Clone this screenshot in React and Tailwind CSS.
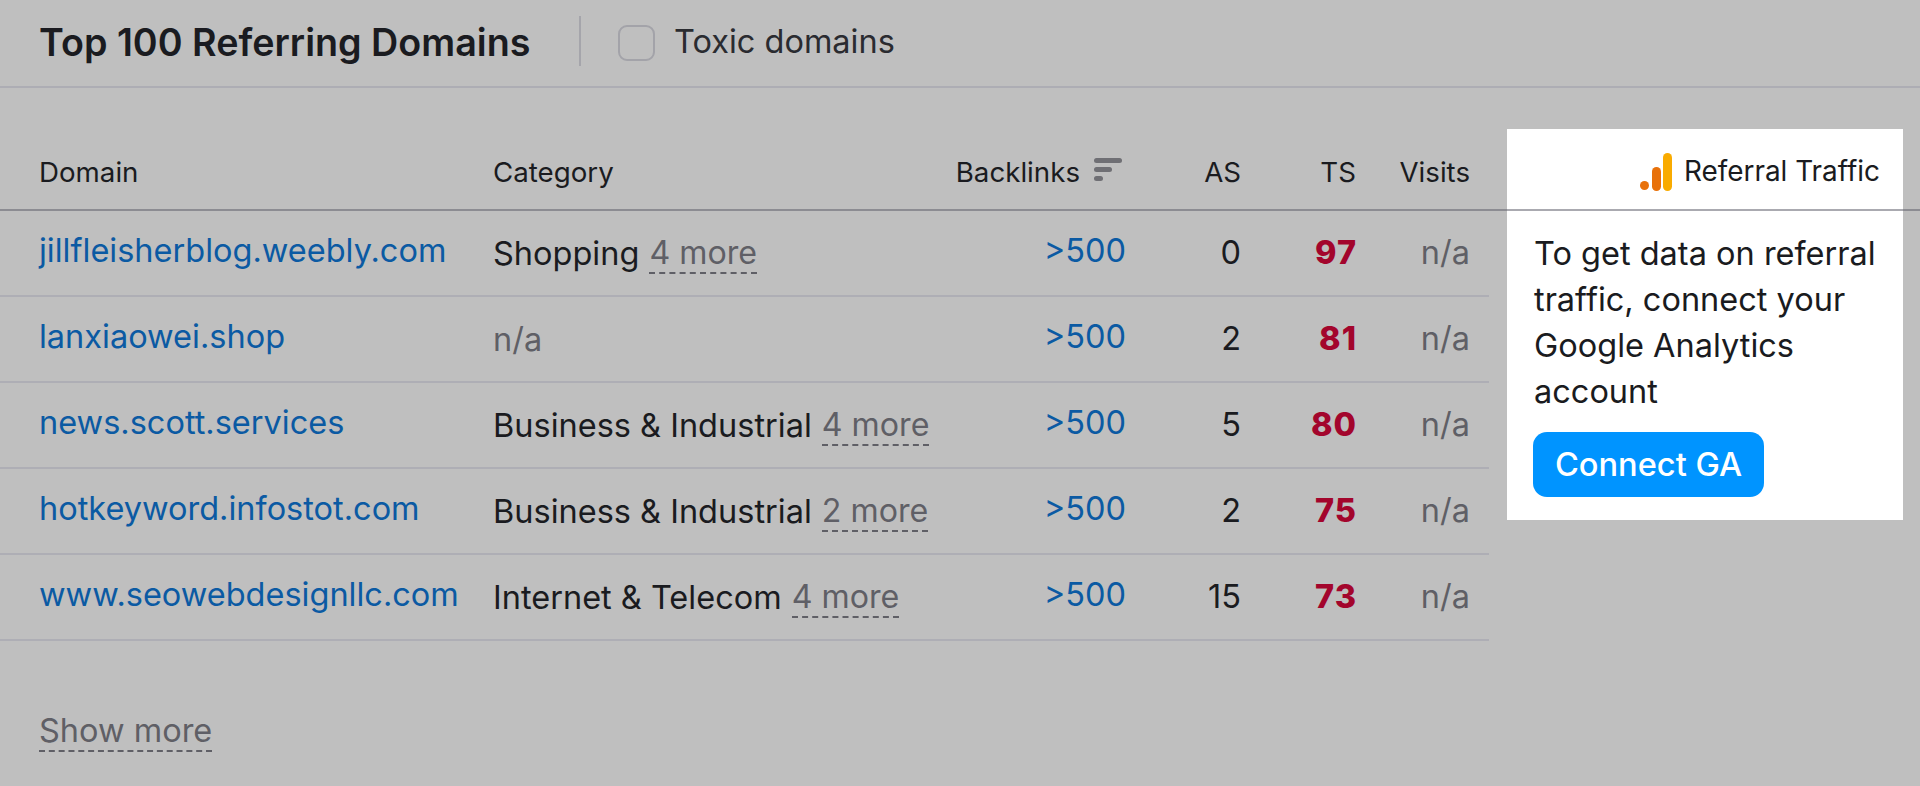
const rows = [
  { domain: 'jillfleisherblog.weebly.com', category: 'Shopping', more: '4 more', as: '0', ts: '97' },
  { domain: 'lanxiaowei.shop', category: null, more: null, as: '2', ts: '81' },
  { domain: 'news.scott.services', category: 'Business & Industrial', more: '4 more', as: '5', ts: '80' },
  { domain: 'hotkeyword.infostot.com', category: 'Business & Industrial', more: '2 more', as: '2', ts: '75' },
  { domain: 'www.seowebdesignllc.com', category: 'Internet & Telecom', more: '4 more', as: '15', ts: '73' },
];

const gridCols = 'grid grid-cols-[454px_390px_243px_115px_115px_114px] items-center pl-[39px] whitespace-nowrap';

function GaIcon() {
  return (
    <svg width="32" height="38" viewBox="0 0 32 38" className="shrink-0">
      <circle cx="4.5" cy="32.5" r="4.5" fill="#e8710a" />
      <rect x="12" y="14" width="9" height="24" rx="4.5" fill="#e8710a" />
      <rect x="23" y="0" width="9" height="38" rx="4.5" fill="#f9ab00" />
    </svg>
  );
}

function SortIcon() {
  return (
    <svg width="28" height="23" viewBox="0 0 28 23" className="mb-[5px] shrink-0">
      <rect x="0" y="0" width="28" height="5" rx="2.5" fill="#6f6f74" />
      <rect x="0" y="9" width="18" height="5" rx="2.5" fill="#6f6f74" />
      <rect x="0" y="18" width="9" height="5" rx="2.5" fill="#6f6f74" />
    </svg>
  );
}

export default function App() {
  return (
    <div className="relative h-[786px] w-full overflow-hidden bg-[#bfbfbf] font-['Inter',sans-serif] text-[#1a1b20]">
      <div className="flex h-[88px] items-center border-b-2 border-[#adadb4] pl-[39px]">
        <h2 className="w-[540px] pb-[2px] text-[37.7px] font-semibold">Top 100 Referring Domains</h2>
        <div className="mb-[5px] h-[50px] w-[2px] bg-[#a5a5ab]" />
        <div className="ml-[37px] h-[36px] w-[37px] rounded-[9px] border-2 border-[#a3a3a9]" />
        <span className="ml-[19px] pb-[2px] text-[32.5px] text-[#2a2b30]">Toxic domains</span>
      </div>

      <div className={`${gridCols} mt-[43px] h-[80px] border-b-2 border-[#8c8c92] pt-[5px] text-[27.7px]`}>
        <div>Domain</div>
        <div>Category</div>
        <div className="flex items-center justify-end gap-[14px] pr-[4px]">
          <span>Backlinks</span>
          <SortIcon />
        </div>
        <div className="text-right">AS</div>
        <div className="text-right">TS</div>
        <div className="text-right">Visits</div>
      </div>

      <div className="w-[1489px]">
        {rows.map((row) => (
          <div key={row.domain} className={`${gridCols} h-[86px] border-b-2 border-[#aeaeb5] text-[32.5px]`}>
            <div className="pb-[4px] text-[#0b5aa3]">{row.domain}</div>
            <div className="flex items-center gap-[10px] pt-[2px]">
              {row.category ? (
                <>
                  <span>{row.category}</span>
                  <span className="border-b-2 border-dashed border-[#5f5f66] text-[32.2px] leading-[38px] text-[#5f5f66]">{row.more}</span>
                </>
              ) : (
                <span className="text-[#5f5f66]">n/a</span>
              )}
            </div>
            <div className="pb-[4px] text-right text-[#0b5aa3]">&gt;500</div>
            <div className="text-right">{row.as}</div>
            <div className="mr-[-1px] pt-[1px] text-right font-extrabold tracking-[1px] text-[#a3052c]">{row.ts}</div>
            <div className="pt-[1px] text-right text-[#5f5f66]">n/a</div>
          </div>
        ))}
      </div>

      <div className="mt-[71px] pl-[39px]">
        <span className="inline-block border-b-2 border-dashed border-[#5f5f66] text-[32.5px] leading-[38px] text-[#5f5f66]">Show more</span>
      </div>

      <div className="absolute top-[129px] left-[1507px] h-[391px] w-[396px] bg-white">
        <div className="flex h-[82px] items-center justify-end gap-[12px] border-b-2 border-[#aaaab0] pt-[5px] pr-[23px] text-[27.9px]">
          <GaIcon />
          <span>Referral Traffic</span>
        </div>
        <div className="px-[26px] pt-[20px]">
          <p className="pl-[1px] text-[32.5px] leading-[46px]">To get data on referral traffic, connect your Google Analytics account</p>
          <button className="mt-[17px] h-[65px] w-[231px] rounded-[14px] bg-[#0094ff] text-[32.6px] font-medium text-white">Connect GA</button>
        </div>
      </div>
    </div>
  );
}
